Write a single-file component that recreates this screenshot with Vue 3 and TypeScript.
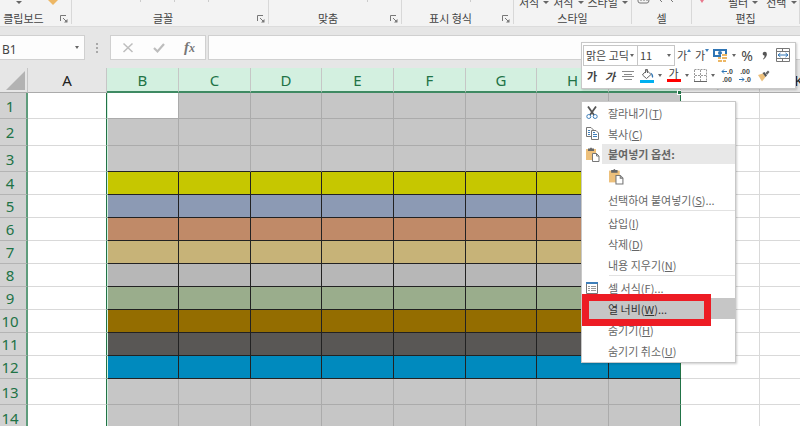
<script setup lang="ts">
import { ref } from 'vue'

interface SheetRow {
  n: number
  size: 'tall' | 'taller' | 'short'
  fill?: string
}

const columns = ['A', 'B', 'C', 'D', 'E', 'F', 'G', 'H', 'I', 'J', 'K']

const rows: SheetRow[] = [
  { n: 1, size: 'tall' },
  { n: 2, size: 'taller' },
  { n: 3, size: 'tall' },
  { n: 4, size: 'short', fill: 'lime' },
  { n: 5, size: 'short', fill: 'slate' },
  { n: 6, size: 'short', fill: 'clay' },
  { n: 7, size: 'short', fill: 'sand' },
  { n: 8, size: 'short', fill: 'silver' },
  { n: 9, size: 'short', fill: 'sage' },
  { n: 10, size: 'short', fill: 'bronze' },
  { n: 11, size: 'short', fill: 'coal' },
  { n: 12, size: 'short', fill: 'blue' },
  { n: 13, size: 'tall' },
  { n: 14, size: 'taller' },
]

const isSelected = (c: string) => c >= 'B' && c <= 'I'

function cellClass(c: string, row: SheetRow) {
  return [
    isSelected(c) ? 'sel' : '',
    isSelected(c) && row.fill ? `filled ${row.fill}` : '',
    isSelected(c) && row.n === 3 ? 'above-fill' : '',
    c === 'A' ? 'edge-before' : '',
    c === 'B' ? 'edge-first' : '',
    c === 'I' ? 'edge-last' : '',
    c === 'B' && row.n === 1 ? 'active' : '',
  ]
}

const groups = [
  { id: 'clip', label: '클립보드', launcher: true },
  { id: 'font', label: '글꼴', launcher: true },
  { id: 'align', label: '맞춤', launcher: true },
  { id: 'number', label: '표시 형식', launcher: true },
  { id: 'style', label: '스타일', launcher: false },
  { id: 'cell', label: '셀', launcher: false },
  { id: 'edit', label: '편집', launcher: false },
]

const cellName = ref('B1')
const formula = ref('')
</script>

<template>
  <div class="app">
    <header class="ribbon">
      <section v-for="g in groups" :key="g.id" class="group" :class="g.id">
        <div class="commands">
          <template v-if="g.id === 'clip'">
            <i class="caret"></i>
            <svg class="bit" width="10" height="5" viewBox="0 0 10 5"><path d="M0 0H10L5 5Z" fill="#edb765" /></svg>
          </template>
          <template v-else-if="g.id === 'font'">
            <i class="tick"></i><i class="tick"></i><i class="tick"></i>
          </template>
          <template v-else-if="g.id === 'align' || g.id === 'number'"><i class="tick"></i></template>
          <template v-else-if="g.id === 'style'">
            <button type="button">서식<i class="caret"></i></button>
            <button type="button">서식<i class="caret"></i></button>
            <button type="button">스타일<i class="caret"></i></button>
          </template>
          <template v-else-if="g.id === 'cell'">
            <svg class="bit" width="38" height="5" viewBox="0 0 38 5" fill="none" stroke="#777">
              <path d="M1 0V1Q1 3 3 3H10Q12 3 12 0M4 0V1M7 0V1M10 0V1" />
              <path d="M23 0L25 2M34 0L36 2" />
            </svg>
          </template>
          <template v-else>
            <svg class="bit" width="6" height="4" viewBox="0 0 6 4"><path d="M1 0H5L3 3Z" fill="#e8788c" /></svg>
            <button type="button">필터<i class="caret"></i></button>
            <button type="button">선택<i class="caret"></i></button>
          </template>
        </div>
        <div class="caption">
          <span>{{ g.label }}</span>
          <button v-if="g.launcher" type="button" class="launcher" :aria-label="g.label">
            <svg width="8" height="8" viewBox="0 0 8 8" fill="none" stroke="#777">
              <path d="M.5 6V.5H6M3 3L6 6" /><path d="M7.500 4V7.500H4Z" fill="#777" stroke="none" />
            </svg>
          </button>
        </div>
      </section>
    </header>

    <div class="formula-bar">
      <div class="name-box">
        <input v-model="cellName" aria-label="이름 상자" />
        <i class="caret"></i>
      </div>
      <svg class="grip" width="4" height="12" viewBox="0 0 4 12" fill="#a8a8a8">
        <path d="M1 1h2v2H1zM1 5h2v2H1zM1 9h2v2H1z" />
      </svg>
      <div class="fx">
        <button type="button" aria-label="취소">
          <svg width="12" height="12" viewBox="0 0 12 12" fill="none" stroke="#bdbdbd" stroke-width="1.500"><path d="M1.500 1.500L10.500 10M10.500 1.500L1.500 10" /></svg>
        </button>
        <button type="button" aria-label="입력">
          <svg width="12" height="12" viewBox="0 0 12 12" fill="none" stroke="#bdbdbd" stroke-width="2.200"><path d="M1 6L4.500 9.500L11 2" /></svg>
        </button>
        <button type="button" class="fn" aria-label="함수 삽입">f<small>x</small></button>
      </div>
      <input v-model="formula" class="formula" aria-label="수식 입력줄" />
    </div>

    <main class="sheet">
      <table>
        <colgroup>
          <col class="w-head" />
          <col v-for="c in columns" :key="c" :class="isSelected(c) ? (c === 'D' || c === 'G' ? 'w-mid' : 'w-sel') : 'w-free'" />
        </colgroup>
        <thead>
          <tr>
            <th class="corner"><svg width="19" height="19" viewBox="0 0 19 19"><path d="M19 0V19H0Z" fill="#b3b3b3" /></svg></th>
            <th v-for="c in columns" :key="c" scope="col" :class="{ on: isSelected(c) }">
              {{ c }}<i v-if="c === 'I'" class="handle"></i>
            </th>
          </tr>
        </thead>
        <tbody>
          <tr v-for="r in rows" :key="r.n" :class="r.size">
            <th scope="row">{{ r.n }}</th>
            <td v-for="c in columns" :key="c" :class="cellClass(c, r)"></td>
          </tr>
        </tbody>
      </table>
    </main>

    <div class="mini" role="toolbar">
      <div class="line">
        <label class="combo family"><select aria-label="글꼴"><option>맑은 고딕</option></select><i class="caret"></i></label>
        <label class="combo size"><select aria-label="글꼴 크기"><option>11</option></select><i class="caret"></i></label>
        <button type="button" class="ga" aria-label="글꼴 크기 크게">가<svg width="4" height="3" viewBox="0 0 4 3"><path d="M0 3L2 0L4 3Z" fill="#3f7fba" /></svg></button>
        <button type="button" class="ga" aria-label="글꼴 크기 작게">가<svg width="4" height="3" viewBox="0 0 4 3"><path d="M0 0H4L2 3Z" fill="#3f7fba" /></svg></button>
        <button type="button" class="split" aria-label="회계 표시 형식">
          <svg width="15" height="15" viewBox="0 0 15 15">
            <path d="M0 1H14V9H0Z" fill="#2f75b5" /><path d="M2 3H12V7H2Z" fill="#fff" /><circle cx="7" cy="5" r="2" fill="#2f75b5" />
            <path d="M8 6H14V14H4V9H8Z" fill="#fff" />
            <g fill="#edb765"><path d="M9 6h5v2H9zM9 9h5v2H9zM5 9h3v2H5zM5 12h4v2H5zM10 12h3v2h-3z" /></g>
          </svg><i class="caret"></i>
        </button>
        <button type="button" class="pct">%</button>
        <button type="button" class="comma" aria-label="쉼표 스타일"><svg width="6" height="9" viewBox="0 0 6 9"><path d="M1 1.500Q3 0 4.500 1.500Q6 5 1.500 8.500L1 8Q3 6 2.500 4.500Q0 4.500 1 1.500Z" fill="#555" /></svg></button>
        <button type="button" aria-label="병합하고 가운데 맞춤">
          <svg width="14" height="14" viewBox="0 0 14 14" fill="none"><path d="M.5.5H13.500V13.500H.5ZM.5 3.500H13.500M.5 10.500H13.500M6.500.5V3.500M6.500 10.500V13.500" stroke="#777" /><path d="M2 7H12M4.500 5L2 7L4.500 9M9.500 5L12 7L9.500 9" stroke="#2f75b5" /></svg>
        </button>
      </div>
      <div class="line">
        <button type="button" class="ga bold" aria-label="굵게">가</button>
        <button type="button" class="ga bold italic" aria-label="기울임꼴">가</button>
        <button type="button" aria-label="가운데 맞춤">
          <svg width="12" height="9" viewBox="0 0 12 9" stroke="#8a8a8a"><path d="M0 .5H12M2 3.500H10M0 5.500H12M2 8.500H10" /></svg>
        </button>
        <button type="button" class="split" aria-label="채우기 색">
          <svg width="14" height="14" viewBox="0 0 14 14" fill="none"><path d="M3 5L7 1.500L11 5.500L6.500 9.500L2.500 6Z" stroke="#666" fill="#fff" /><path d="M5.500 4V.5H7.500V4" stroke="#666" /><path d="M10.500 3.500Q14 5 13 9Q11.500 8.500 11.500 6Z" fill="#2f75b5" /><path d="M0 11H14V14H0Z" fill="#00b0f0" /></svg><i class="caret"></i>
        </button>
        <button type="button" class="split" aria-label="글꼴 색"><span class="inked">가</span><i class="caret"></i></button>
        <button type="button" class="split" aria-label="테두리">
          <svg width="13" height="13" viewBox="0 0 13 13" fill="none"><path d="M.5.5H12.500V12M6.500 1V12M.5 1V12M1 6.500H12" stroke="#999" stroke-dasharray="2 1" /><path d="M0 12.500H13" stroke="#666" /></svg><i class="caret"></i>
        </button>
        <button type="button" class="dec" aria-label="자릿수 늘림">
          <span><svg width="6" height="5" viewBox="0 0 6 5"><path d="M6 2.500H1M3 .5L1 2.500L3 4.500" fill="none" stroke="#2f75b5" /></svg>.0</span><span>.00</span>
        </button>
        <button type="button" class="dec" aria-label="자릿수 줄임">
          <span>.00</span><span><svg width="6" height="5" viewBox="0 0 6 5"><path d="M0 2.500H5M3 .5L5 2.500L3 4.500" fill="none" stroke="#2f75b5" /></svg>.0</span>
        </button>
        <button type="button" aria-label="서식 복사">
          <svg width="13" height="12" viewBox="0 0 13 12"><path d="M1 5L6 3.500L8.500 7L5 11.500Z" fill="#edc07b" /><path d="M5.500 3L7.500 2L10 5.500L8.500 7Z" fill="#555" /><path d="M8.500 3L11 .5L12.500 2L10 5Z" fill="#666" /></svg>
        </button>
      </div>
    </div>

    <div class="menu" role="menu">
      <button type="button" role="menuitem">
        <svg width="12" height="14" viewBox="0 0 12 14" fill="none"><path d="M2 .5L8 9M10 .5L4 9" stroke="#555" stroke-width="1.800" /><circle cx="2.800" cy="10.500" r="2" stroke="#3f7fba" /><circle cx="9.200" cy="10.500" r="2" stroke="#3f7fba" /></svg>
        <span>잘라내기(<u>T</u>)</span>
      </button>
      <button type="button" role="menuitem">
        <svg width="13" height="13" viewBox="0 0 13 13" fill="#fff" stroke="#777"><path d="M.5.5H5L7.500 3V9.500H.5Z" /><path d="M5.500 3.500H10L12.500 6V12.500H5.500Z" /><path d="M2 3.500H4M2 5.500H4M2 7.500H4M7 7.500H11M7 9.500H11M7 5.500H9" stroke="#3f7fba" /></svg>
        <span>복사(<u>C</u>)</span>
      </button>
      <div class="heading">
        <svg width="14" height="15" viewBox="0 0 14 15"><path d="M0 2H10V13H0Z" fill="#edc07b" /><path d="M2 1.500H4Q5 -.5 6 1.500H8V4H2Z" fill="#666" /><path d="M6.500 6.500H10.500L13 9V14.500H6.500Z" fill="#fff" stroke="#777" /><path d="M10.500 6.500V9H13" fill="none" stroke="#777" /></svg>
        <span>붙여넣기 옵션:</span>
      </div>
      <button type="button" class="paste" role="menuitem" aria-label="붙여넣기">
        <svg width="15" height="17" viewBox="0 0 14 15"><path d="M0 2H10V13H0Z" fill="#edc07b" /><path d="M2 1.500H4Q5 -.5 6 1.500H8V4H2Z" fill="#666" /><path d="M6.500 6.500H10.500L13 9V14.500H6.500Z" fill="#fff" stroke="#777" /><path d="M10.500 6.500V9H13" fill="none" stroke="#777" /></svg>
      </button>
      <button type="button" role="menuitem"><span>선택하여 붙여넣기(<u>S</u>)...</span></button>
      <hr />
      <button type="button" role="menuitem"><span>삽입(<u>I</u>)</span></button>
      <button type="button" role="menuitem"><span>삭제(<u>D</u>)</span></button>
      <button type="button" role="menuitem"><span>내용 지우기(<u>N</u>)</span></button>
      <hr />
      <button type="button" role="menuitem">
        <svg width="12" height="12" viewBox="0 0 12 12" fill="none"><path d="M.5.5H11.500V11.500H.5Z" fill="#fff" stroke="#777" /><path d="M0 0H12V2H0Z" fill="#3f7fba" /><path d="M2 4.500H4M2 6.500H4M2 8.500H4M5 4.500H10M5 6.500H10M5 8.500H10" stroke="#999" /></svg>
        <span>셀 서식(<u>F</u>)...</span>
      </button>
      <button type="button" class="hot" role="menuitem"><span>열 너비(<u>W</u>)...</span></button>
      <button type="button" role="menuitem"><span>숨기기(<u>H</u>)</span></button>
      <button type="button" role="menuitem"><span>숨기기 취소(<u>U</u>)</span></button>
      <div class="marker"></div>
    </div>
  </div>
</template>

<style>
body {
  margin: 0;
  overflow: hidden;
}
</style>

<style scoped>
.app {
  position: relative;
  height: 100vh;
  overflow: hidden;
  background: #e6e6e6;
  font-family: 'Noto Sans', 'Noto Sans CJK KR', sans-serif;
  color: #444;
}
button {
  padding: 0;
  border: 0;
  background: none;
  font: inherit;
  color: inherit;
}
input,
select {
  box-sizing: border-box;
  min-width: 0;
  padding: 0;
  border: 0;
  outline: 0;
  background: none;
  font: inherit;
  color: inherit;
}
svg {
  display: block;
  flex: none;
}
.caret {
  flex: none;
  width: 0;
  height: 0;
  border: 3px solid transparent;
  border-top-color: #666;
  border-bottom-width: 0;
}

/* ribbon */
.ribbon {
  display: grid;
  grid-template-columns: 82px 197px 133px 112px 118px 60px 1fr;
  margin-left: -10px;
  padding-bottom: 2px;
  background: #f3f3f3;
  border-bottom: 1px solid #dcdcdc;
  font-family: 'Noto Sans CJK KR', sans-serif;
  font-size: 11px;
}
.group {
  height: 24px;
  border-right: 1px solid #d8d8d8;
}
.commands {
  display: flex;
  align-items: flex-start;
  height: 10px;
}
.commands button {
  display: flex;
  align-items: center;
  gap: 4px;
  height: 4px;
  white-space: nowrap;
}
.clip .commands {
  padding-left: 26px;
  gap: 26px;
}
.clip .caret {
  margin-top: 1px;
}
.font .commands {
  padding-left: 68px;
  gap: 33px;
}
.align .commands {
  padding-left: 98px;
}
.number .commands {
  padding-left: 68px;
}
.style .commands {
  padding-left: 5px;
  gap: 4px;
}
.cell .commands {
  padding-left: 5px;
}
.edit .commands {
  padding-left: 7px;
  gap: 8px;
}
.edit .bit {
  margin-right: 15px;
}
.tick {
  width: 1px;
  height: 2px;
  background: #ccc;
}
.caption {
  display: flex;
  align-items: center;
  height: 16px;
  line-height: 16px;
  text-align: center;
}
.caption span {
  flex: 1;
}
.launcher {
  width: 14px;
  padding: 4px 3px 2px;
}

/* formula bar */
.formula-bar {
  display: flex;
  align-items: center;
  height: 25px;
  padding: 8px 0;
  font-size: 12px;
}
.name-box,
.fx,
.formula {
  box-sizing: border-box;
  height: 25px;
  border: 1px solid #d0d0d0;
  background: #fdfdfd;
}
.name-box {
  display: flex;
  align-items: center;
  width: 85px;
  padding: 0 5px 0 2px;
  border-left: 0;
}
.name-box input {
  flex: 1;
  padding-top: 3px;
}
.grip {
  margin: 0 11px 0 10px;
}
.fx {
  display: flex;
  align-items: center;
  width: 96px;
  padding-left: 1px;
  margin-right: 2px;
}
.fx button {
  display: flex;
  flex: 1;
  justify-content: center;
}
.fx .fn {
  align-items: baseline;
  font: italic 700 15px 'Liberation Serif', serif;
  color: #777;
}
.fn small {
  font-size: 12px;
}
.formula {
  flex: 1;
  padding: 0 6px;
  border-right: 0;
}

/* sheet */
.sheet {
  overflow: hidden;
}
table {
  width: 839px;
  min-width: 100%;
  table-layout: fixed;
  border-spacing: 0;
}
.w-head {
  width: 28px;
}
.w-sel {
  width: 72px;
}
.w-mid {
  width: 71px;
}
.w-free {
  width: 79px;
}
th,
td {
  box-sizing: border-box;
  padding: 0;
}
th {
  font-weight: 400;
  font-size: 15px;
  line-height: 20px;
}
thead th {
  position: relative;
  height: 25px;
  border-right: 1px solid #c6c6c6;
  border-bottom: 1px solid #ababab;
  background: #e6e6e6;
  color: #222;
}
thead .on {
  border-bottom: 2px solid #3f8a63;
  background: #d3f0e0;
  color: #217346;
}
.corner svg {
  margin: 1px 0 0 6px;
}
.handle {
  position: absolute;
  right: -2px;
  bottom: -4px;
  width: 3px;
  height: 3px;
  border: 1px solid #fff;
  background: #217346;
}
tbody th {
  border-right: 2px solid #5f9c7c;
  border-bottom: 1px solid #b4b4b4;
  background: #d2d2d2;
  color: #217346;
  padding-right: 6px;
}
td {
  border-right: 1px solid #d9d9d9;
  border-bottom: 1px solid #d9d9d9;
  background: #fff;
}
.tall > * {
  height: 26px;
}
.taller > * {
  height: 27px;
}
.short > * {
  height: 23px;
}
.sel {
  border-color: #ababab;
  background: #c6c6c6;
}
.edge-before {
  border-right-color: #217346;
}
.edge-first {
  border-left: 1px solid #d3f0e0;
}
.above-fill {
  border-bottom-color: #222;
}
.filled {
  border-color: #222;
}
.edge-first.filled {
  border-left-color: #d3f0e0;
}
.sel.edge-last {
  border-right-color: #217346;
}
.active {
  background: #fff;
}
.lime { background: #c6c700; }
.slate { background: #8c9ab4; }
.clay { background: #c08a68; }
.sand { background: #c7b378; }
.silver { background: #b7b7b7; }
.sage { background: #9aad8c; }
.bronze { background: #946d00; }
.coal { background: #595755; }
.blue { background: #008abe; }

/* floating toolbar */
.mini {
  position: absolute;
  top: 42px;
  left: 581px;
  box-sizing: border-box;
  width: 215px;
  padding: 2px 1px;
  border: 1px solid #c8c8c8;
  background: #fff;
  box-shadow: 1px 1px 2px #0003;
  font-family: 'Noto Sans CJK KR', sans-serif;
  font-size: 11px;
}
.line {
  display: flex;
  align-items: center;
  height: 20px;
}
.line + .line {
  height: 21px;
}
.line button {
  display: flex;
  flex: none;
  align-items: center;
  justify-content: center;
  width: 18px;
  height: 20px;
}
.line .split {
  gap: 4px;
  width: 27px;
}
.line .caret,
.name-box .caret {
  border-width: 3px 2px 0;
}
.combo {
  display: flex;
  align-items: center;
  box-sizing: border-box;
  height: 21px;
  padding: 0 3px 0 2px;
  border: 1px solid #c6c6c6;
}
.combo select {
  flex: 1;
  appearance: none;
  overflow: hidden;
  white-space: nowrap;
}
.family {
  width: 55px;
}
.size {
  width: 38px;
  margin-left: -1px;
}
.ga svg {
  margin-bottom: 9px;
}
.bold {
  font-weight: 700;
}
.italic {
  font-style: italic;
}
.line .pct {
  font-family: 'Noto Sans', sans-serif;
  font-size: 14px;
}
.inked {
  width: 14px;
  height: 10px;
  border-bottom: 3px solid #f00;
  line-height: 9px;
}
.line .dec {
  flex-direction: column;
  font: 700 7px/8px 'Liberation Sans', sans-serif;
}
.dec span {
  display: flex;
  align-items: center;
}

/* context menu */
.menu {
  position: absolute;
  top: 101px;
  left: 581px;
  box-sizing: border-box;
  width: 155px;
  padding-bottom: 1px;
  border: 1px solid #c8c8c8;
  background: #fff;
  box-shadow: 1px 1px 2px #0003;
  font-family: 'Noto Sans CJK KR', sans-serif;
  font-size: 11px;
  color: #666;
}
.menu button,
.heading {
  display: grid;
  grid-template-columns: 20px 1fr;
  align-items: center;
  width: 100%;
  height: 21px;
  line-height: 20px;
  text-align: left;
  white-space: nowrap;
}
.menu svg {
  grid-column: 1;
  margin-left: 4px;
}
.menu span {
  grid-column: 2;
  padding-left: 6px;
}
.menu .heading {
  height: 20px;
}
.heading span {
  background: #e8e8e8;
  font-weight: 700;
}
.menu .paste {
  height: 25px;
}
.menu .paste svg {
  grid-column: 2;
  margin-left: 7px;
}
.menu hr {
  height: 1px;
  margin: 0 0 1px 27px;
  border: 0;
  background: #e2e2e2;
}
.menu .hot {
  background: #c6c6c6;
  color: #333;
}
.marker {
  position: absolute;
  top: 192px;
  left: 0;
  box-sizing: border-box;
  width: 129px;
  height: 32px;
  border: 7px solid #ed1c24;
  pointer-events: none;
}
</style>
